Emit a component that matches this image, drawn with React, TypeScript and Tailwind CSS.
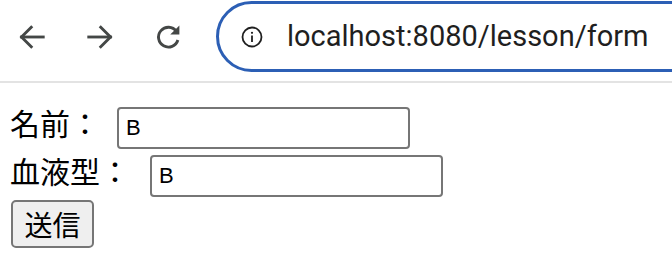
import React from 'react';

const jp = "font-['Noto_Sans_CJK_JP','Noto_Sans',sans-serif]";
const field =
  "w-[293px] h-[42px] border-2 border-[#767676] rounded-[4px] pl-[7px] outline-none text-[22px] font-['Liberation_Sans',sans-serif]";

function BackIcon() {
  return (
    <svg width="36" height="36" viewBox="0 0 24 24" fill="none" stroke="#444746" strokeWidth="1.9" strokeLinecap="square">
      <path d="M19.5 12H5" />
      <path d="M11.5 5.5 5 12l6.5 6.5" />
    </svg>
  );
}

function ForwardIcon() {
  return (
    <svg width="36" height="36" viewBox="0 0 24 24" fill="none" stroke="#444746" strokeWidth="1.9" strokeLinecap="square">
      <path d="M4.5 12H19" />
      <path d="M12.5 5.5 19 12l-6.5 6.5" />
    </svg>
  );
}

function ReloadIcon() {
  return (
    <svg width="36" height="36" viewBox="0 0 24 24" fill="none">
      <path d="M17.6 8.2A6.6 6.6 0 1 0 18.6 14" stroke="#444746" strokeWidth="1.9" />
      <path d="M19.6 4.3v6.1h-6.1z" fill="#444746" />
    </svg>
  );
}

function InfoIcon() {
  return (
    <svg width="22" height="22" viewBox="0 0 22 22" fill="none">
      <circle cx="11" cy="11" r="9.5" stroke="#1f1f1f" strokeWidth="1.8" />
      <circle cx="11" cy="6.8" r="1.1" fill="#1f1f1f" />
      <path d="M11 9.6v6.4" stroke="#1f1f1f" strokeWidth="1.8" />
    </svg>
  );
}

export default function App() {
  return (
    <div className="w-[672px] h-[272px] bg-white overflow-hidden">
      {/* Browser toolbar */}
      <div className="h-[83px] border-b-2 border-[#e3e3e3] overflow-hidden">
        <div className="flex items-center h-[71px] mt-[1px] pl-[14px]">
          <div className="flex items-center gap-[32px]">
            <BackIcon />
            <ForwardIcon />
            <ReloadIcon />
          </div>
          <div className="ml-[30px] h-[71px] w-[520px] shrink-0 rounded-full border-[3px] border-[#2c5fb5] flex items-center pl-[22px]">
            <InfoIcon />
            <span className="ml-[24px] text-[29px] text-[#1f1f1f] font-['Roboto',sans-serif]">
              localhost:8080/lesson/form
            </span>
          </div>
        </div>
      </div>

      {/* Form */}
      <form className={`mt-[21px] pl-[10px] text-black ${jp}`}>
        <div className="flex items-center h-[48px]">
          <span className="text-[30px] leading-none mt-[-12px]">名前：</span>
          <input defaultValue="B" className={`ml-[17px] ${field}`} />
        </div>
        <div className="flex items-center h-[48px]">
          <span className="text-[30px] leading-none mt-[-12px]">血液型：</span>
          <input defaultValue="B" className={`ml-[20px] ${field}`} />
        </div>
        <div className="flex items-center h-[48px]">
          <button
            type="button"
            className="ml-[1px] w-[83px] h-[48px] bg-[#efefef] border-2 border-[#767676] rounded-[5px] text-[28px] leading-none"
          >
            送信
          </button>
        </div>
      </form>
    </div>
  );
}
